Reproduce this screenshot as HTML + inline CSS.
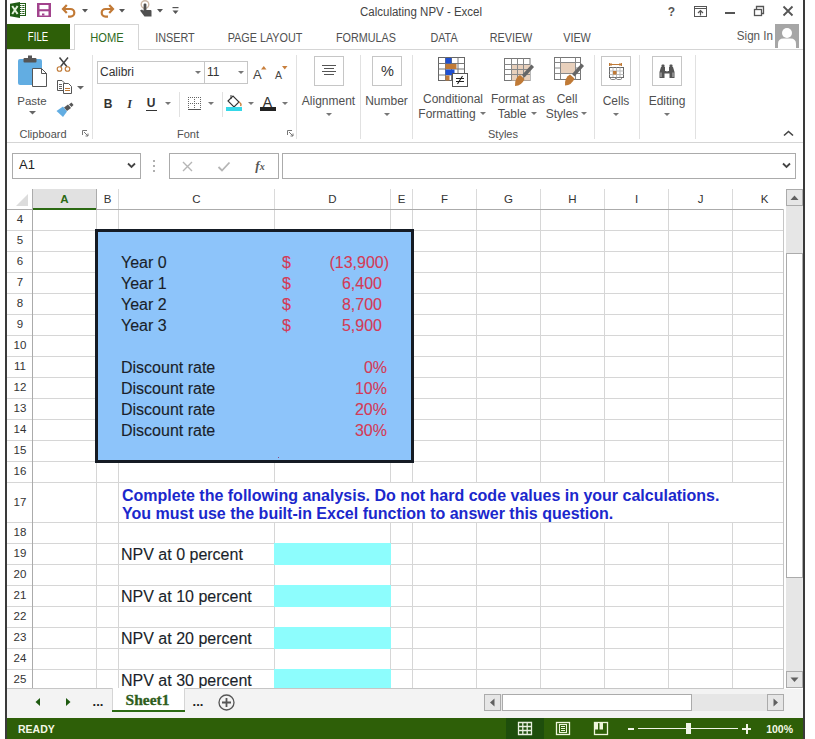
<!DOCTYPE html>
<html><head><meta charset="utf-8"><title>Calculating NPV - Excel</title>
<style>
html,body{margin:0;padding:0;}
body{width:815px;height:739px;position:relative;overflow:hidden;background:#fff;font-family:'Liberation Sans', sans-serif;}
body>div{position:absolute;box-sizing:content-box;}
</style></head><body>
<svg style="position:absolute;left:8px;top:1px" width="20" height="18" viewBox="0 0 20 18">
<rect x="11" y="2.5" width="6.5" height="12" fill="#fff" stroke="#1f5c14" stroke-width="1"/>
<path d="M12 4.5h4.5M12 6.5h4.5M12 8.5h4.5M12 10.5h4.5M12 12.5h4.5" stroke="#1f5c14" stroke-width="1"/>
<path d="M13.8 3v11" stroke="#fff" stroke-width="0.8"/>
<path d="M2 2.8 L12 1 V17 L2 15.2 Z" fill="#1f5c14"/>
<path d="M4.2 5 L9.6 13 M9.6 5 L4.2 13" stroke="#e4f2dc" stroke-width="2"/>
</svg>
<svg style="position:absolute;left:36px;top:2px" width="16" height="16" viewBox="0 0 16 16">
<rect x="1" y="1" width="14" height="14" fill="#a2438d"/>
<rect x="3.5" y="3" width="9" height="4.2" fill="#fff"/>
<rect x="3.5" y="9.3" width="9" height="4.2" fill="#fff"/>
<rect x="6" y="11.5" width="2.4" height="2" fill="#a2438d"/>
</svg>
<svg style="position:absolute;left:60px;top:2px" width="20" height="16" viewBox="0 0 20 16">
<path d="M4 7 H10.5 A3.8 3.8 0 0 1 10.5 14.6 H8" fill="none" stroke="#c27a36" stroke-width="2.2"/>
<path d="M6.8 3 L3 7 L6.8 11" fill="none" stroke="#c27a36" stroke-width="2.2"/>
</svg>
<svg style="position:absolute;left:82px;top:9px" width="6" height="4" viewBox="0 0 6 4"><path d="M0 0 H6 L3 3.5 Z" fill="#555"/></svg>
<svg style="position:absolute;left:97px;top:2px" width="20" height="16" viewBox="0 0 20 16">
<path d="M15 7 H8.5 A3.8 3.8 0 0 0 8.5 14.6 H11" fill="none" stroke="#c27a36" stroke-width="2.2"/>
<path d="M12.2 3 L16 7 L12.2 11" fill="none" stroke="#c27a36" stroke-width="2.2"/>
</svg>
<svg style="position:absolute;left:119px;top:9px" width="6" height="4" viewBox="0 0 6 4"><path d="M0 0 H6 L3 3.5 Z" fill="#555"/></svg>
<svg style="position:absolute;left:138px;top:0px" width="16" height="18" viewBox="0 0 16 18">
<circle cx="7" cy="4.5" r="3.8" fill="none" stroke="#cdb8a6" stroke-width="1.4"/>
<rect x="5.6" y="3.5" width="2.8" height="8" rx="1.2" fill="#505050"/>
<path d="M2 10.5 L4 9.5 L5.6 11 V10 H12.5 Q13.5 10 13.5 11 V16.5 H6.5 Z" fill="#505050"/>
</svg>
<svg style="position:absolute;left:157px;top:9px" width="6" height="4" viewBox="0 0 6 4"><path d="M0 0 H6 L3 3.5 Z" fill="#555"/></svg>
<svg style="position:absolute;left:172px;top:7px" width="7" height="8" viewBox="0 0 7 8"><rect x="0.5" y="0" width="6" height="1.2" fill="#555"/><path d="M0.5 3.5 H6.5 L3.5 7 Z" fill="#555"/></svg>
<div style="left:360px;top:5.79px;font:400 12.3px/12.3px 'Liberation Sans', sans-serif;color:#444;white-space:pre;transform:scaleX(0.935);transform-origin:left;">Calculating NPV - Excel</div>
<div style="left:371.5px;width:600px;text-align:center;top:5.84px;font:700 12px/12px 'Liberation Sans', sans-serif;color:#555;white-space:pre;">?</div>
<svg style="position:absolute;left:693px;top:5px" width="15" height="12" viewBox="0 0 15 12">
<rect x="1.5" y="1.5" width="12" height="10" fill="none" stroke="#555" stroke-width="1"/>
<path d="M1.5 3.5 H13.5" stroke="#555" stroke-width="1"/>
<path d="M7.5 10.5 V5.5 M5 8 L7.5 5.5 L10 8" fill="none" stroke="#555" stroke-width="1.2"/>
</svg>
<div style="left:725px;top:12px;width:10px;height:2px;background:#555;"></div>
<svg style="position:absolute;left:753px;top:5px" width="12" height="12" viewBox="0 0 12 12">
<rect x="1.5" y="4.5" width="7" height="6" fill="none" stroke="#555" stroke-width="1.3"/>
<path d="M3.5 4.5 V1.5 H10.5 V8.5 H8.5" fill="none" stroke="#555" stroke-width="1.3"/>
</svg>
<svg style="position:absolute;left:782px;top:5px" width="12" height="12" viewBox="0 0 12 12"><path d="M1.5 1.5 L10.5 10.5 M10.5 1.5 L1.5 10.5" stroke="#555" stroke-width="1.8"/></svg>
<div style="left:7px;top:24px;width:63px;height:25px;background:#2e5f08;"></div>
<div style="left:-262.5px;width:600px;text-align:center;top:30.84px;font:400 12px/12px 'Liberation Sans', sans-serif;color:#fff;white-space:pre;transform:scaleX(0.8);transform-origin:center;">FILE</div>
<div style="left:74px;top:24px;width:63px;height:25px;border:1px solid #d5d5d5;border-bottom:none;background:#fff"></div>
<div style="left:7px;top:49px;width:67px;height:1px;background:#d5d5d5;"></div>
<div style="left:139px;top:49px;width:664px;height:1px;background:#d5d5d5;"></div>
<div style="left:-193.5px;width:600px;text-align:center;top:31.84px;font:400 12px/12px 'Liberation Sans', sans-serif;color:#2f6b22;white-space:pre;transform:scaleX(0.93);transform-origin:center;">HOME</div>
<div style="left:-125.30000000000001px;width:600px;text-align:center;top:31.84px;font:400 12px/12px 'Liberation Sans', sans-serif;color:#505050;white-space:pre;transform:scaleX(0.9);transform-origin:center;">INSERT</div>
<div style="left:-35.5px;width:600px;text-align:center;top:31.84px;font:400 12px/12px 'Liberation Sans', sans-serif;color:#505050;white-space:pre;transform:scaleX(0.9);transform-origin:center;">PAGE LAYOUT</div>
<div style="left:65.5px;width:600px;text-align:center;top:31.84px;font:400 12px/12px 'Liberation Sans', sans-serif;color:#505050;white-space:pre;transform:scaleX(0.9);transform-origin:center;">FORMULAS</div>
<div style="left:143.8px;width:600px;text-align:center;top:31.84px;font:400 12px/12px 'Liberation Sans', sans-serif;color:#505050;white-space:pre;transform:scaleX(0.9);transform-origin:center;">DATA</div>
<div style="left:211.3px;width:600px;text-align:center;top:31.84px;font:400 12px/12px 'Liberation Sans', sans-serif;color:#505050;white-space:pre;transform:scaleX(0.9);transform-origin:center;">REVIEW</div>
<div style="left:276.70000000000005px;width:600px;text-align:center;top:31.84px;font:400 12px/12px 'Liberation Sans', sans-serif;color:#505050;white-space:pre;transform:scaleX(0.9);transform-origin:center;">VIEW</div>
<div style="left:173px;width:600px;text-align:right;top:30.42px;font:400 12.5px/12.5px 'Liberation Sans', sans-serif;color:#555;white-space:pre;transform:scaleX(0.93);transform-origin:right;">Sign In</div>
<div style="left:775px;top:24px;width:24px;height:24px;background:#a6a6a6;"></div>
<svg style="position:absolute;left:775px;top:24px" width="24" height="24" viewBox="0 0 24 24"><circle cx="12" cy="9" r="5" fill="#fff"/><path d="M3 24 V20 Q3 14.5 8.5 14.5 H15.5 Q21 14.5 21 20 V24 Z" fill="#fff"/></svg>
<div style="left:7px;top:142px;width:796px;height:1px;background:#d5d5d5;"></div>
<div style="left:92px;top:55px;width:1px;height:84px;background:#e1e1e1;"></div>
<div style="left:296px;top:55px;width:1px;height:84px;background:#e1e1e1;"></div>
<div style="left:360px;top:55px;width:1px;height:84px;background:#e1e1e1;"></div>
<div style="left:412px;top:55px;width:1px;height:84px;background:#e1e1e1;"></div>
<div style="left:594px;top:55px;width:1px;height:84px;background:#e1e1e1;"></div>
<div style="left:639px;top:55px;width:1px;height:84px;background:#e1e1e1;"></div>
<div style="left:695px;top:55px;width:1px;height:84px;background:#e1e1e1;"></div>
<div style="left:-257px;width:600px;text-align:center;top:129.19px;font:400 11px/11px 'Liberation Sans', sans-serif;color:#505050;white-space:pre;">Clipboard</div>
<div style="left:-112px;width:600px;text-align:center;top:129.19px;font:400 11px/11px 'Liberation Sans', sans-serif;color:#505050;white-space:pre;">Font</div>
<div style="left:203px;width:600px;text-align:center;top:129.19px;font:400 11px/11px 'Liberation Sans', sans-serif;color:#505050;white-space:pre;">Styles</div>
<svg style="position:absolute;left:16px;top:55px" width="34" height="34" viewBox="0 0 34 34">
<rect x="2" y="4" width="24" height="26" rx="2" fill="#62ade2"/>
<rect x="7.5" y="3" width="13" height="4.5" rx="1" fill="#555"/>
<rect x="12" y="0.5" width="4" height="4" fill="#555"/>
<path d="M16.5 13.5 H25.5 L30.5 18.5 V31.5 H16.5 Z" fill="#fff" stroke="#555" stroke-width="1"/>
<path d="M25.5 13.5 V18.5 H30.5" fill="none" stroke="#555" stroke-width="1"/>
</svg>
<div style="left:-268px;width:600px;text-align:center;top:95.77px;font:400 11.5px/11.5px 'Liberation Sans', sans-serif;color:#505050;white-space:pre;">Paste</div>
<svg style="position:absolute;left:29px;top:111px" width="7" height="4" viewBox="0 0 7 4"><path d="M0 0 H7 L3.5 3.5 Z" fill="#666"/></svg>
<svg style="position:absolute;left:55px;top:56px" width="18" height="17" viewBox="0 0 18 17">
<path d="M4.5 1.5 L12 10.8 M13 1.5 L5.5 10.8" stroke="#444" stroke-width="1.5"/>
<circle cx="4.5" cy="13" r="2.3" fill="#fff" stroke="#c07a36" stroke-width="1.1"/>
<circle cx="12.5" cy="13" r="2.3" fill="#fff" stroke="#c07a36" stroke-width="1.1"/>
</svg>
<svg style="position:absolute;left:56px;top:79px" width="18" height="16" viewBox="0 0 18 16">
<path d="M1.5 1.5 H6 L8 3.5 V11.5 H1.5 Z" fill="#fff" stroke="#555" stroke-width="1"/>
<path d="M3 5.5 H6 M3 7.5 H6 M3 9.5 H6" stroke="#555" stroke-width="0.9"/>
<path d="M7.5 4.5 H12.5 L15.5 7.5 V14.5 H7.5 Z" fill="#fff" stroke="#555" stroke-width="1"/>
<path d="M9 9.5 H14 M9 11.5 H14" stroke="#c07a36" stroke-width="1"/>
</svg>
<svg style="position:absolute;left:77px;top:86px" width="7" height="4" viewBox="0 0 7 4"><path d="M0 0 H7 L3.5 3.5 Z" fill="#666"/></svg>
<svg style="position:absolute;left:56px;top:102px" width="18" height="16" viewBox="0 0 18 16">
<path d="M0.5 9 L7 4.5 L11 9.5 L7 15 Z" fill="#62ade2"/>
<path d="M8 5.5 L12 2.5 L15 6 L11 9 Z" fill="#555"/>
<path d="M13 2.5 L15.5 0.5 L17.5 3 L15.5 5 Z" fill="#555"/>
</svg>
<svg style="position:absolute;left:82px;top:130px" width="7" height="7" viewBox="0 0 7 7"><path d="M0.5 0.5 H5 M0.5 0.5 V5" stroke="#777" stroke-width="1"/><path d="M2 2 L6 6 M6 3.5 V6 H3.5" fill="none" stroke="#777" stroke-width="1"/></svg>
<div style="left:97px;top:61px;width:106px;height:21px;border:1px solid #c6c6c6;background:#fff;"></div>
<div style="left:204px;top:61px;width:42px;height:21px;border:1px solid #c6c6c6;background:#fff;"></div>
<div style="left:100px;top:66.34px;font:400 12px/12px 'Liberation Sans', sans-serif;color:#333;white-space:pre;">Calibri</div>
<div style="left:207px;top:66.34px;font:400 12px/12px 'Liberation Sans', sans-serif;color:#333;white-space:pre;">11</div>
<svg style="position:absolute;left:195px;top:71px" width="6" height="4" viewBox="0 0 6 4"><path d="M0 0 H6 L3 3 Z" fill="#777"/></svg>
<svg style="position:absolute;left:238px;top:71px" width="6" height="4" viewBox="0 0 6 4"><path d="M0 0 H6 L3 3 Z" fill="#777"/></svg>
<div style="left:253px;top:68.00px;font:400 13px/13px 'Liberation Sans', sans-serif;color:#444;white-space:pre;">A</div>
<svg style="position:absolute;left:261px;top:65.5px" width="6" height="4" viewBox="0 0 6 4"><path d="M0 3.5 H5.5 L2.75 0 Z" fill="#c87f3c"/></svg>
<div style="left:275px;top:70.11px;font:400 10.5px/10.5px 'Liberation Sans', sans-serif;color:#444;white-space:pre;">A</div>
<svg style="position:absolute;left:281.5px;top:65.5px" width="6" height="4" viewBox="0 0 6 4"><path d="M0 0 H5.5 L2.75 3.5 Z" fill="#c87f3c"/></svg>
<div style="left:-192px;width:600px;text-align:center;top:97.84px;font:700 12px/12px 'Liberation Sans', sans-serif;color:#333;white-space:pre;">B</div>
<div style="left:-170.5px;width:600px;text-align:center;top:97.95px;font:400 12px/12px 'Liberation Serif', serif;color:#333;white-space:pre;font-style:italic;font-weight:700;">I</div>
<div style="left:-149px;width:600px;text-align:center;top:96.84px;font:700 12px/12px 'Liberation Sans', sans-serif;color:#333;white-space:pre;">U</div>
<div style="left:146px;top:110px;width:11px;height:1px;background:#333;"></div>
<svg style="position:absolute;left:165px;top:102px" width="6" height="4" viewBox="0 0 6 4"><path d="M0 0 H6 L3 3 Z" fill="#777"/></svg>
<div style="left:179px;top:92px;width:1px;height:25px;background:#e1e1e1;"></div>
<svg style="position:absolute;left:188px;top:97px" width="14" height="14" viewBox="0 0 14 14"><rect x="0" y="0" width="1" height="1" fill="#666"/><rect x="0" y="6" width="1" height="1" fill="#666"/><rect x="2" y="0" width="1" height="1" fill="#666"/><rect x="2" y="6" width="1" height="1" fill="#666"/><rect x="4" y="0" width="1" height="1" fill="#666"/><rect x="4" y="6" width="1" height="1" fill="#666"/><rect x="6" y="0" width="1" height="1" fill="#666"/><rect x="6" y="6" width="1" height="1" fill="#666"/><rect x="8" y="0" width="1" height="1" fill="#666"/><rect x="8" y="6" width="1" height="1" fill="#666"/><rect x="10" y="0" width="1" height="1" fill="#666"/><rect x="10" y="6" width="1" height="1" fill="#666"/><rect x="12" y="0" width="1" height="1" fill="#666"/><rect x="12" y="6" width="1" height="1" fill="#666"/><rect x="0" y="0" width="1" height="1" fill="#666"/><rect x="6" y="0" width="1" height="1" fill="#666"/><rect x="12" y="0" width="1" height="1" fill="#666"/><rect x="0" y="2" width="1" height="1" fill="#666"/><rect x="6" y="2" width="1" height="1" fill="#666"/><rect x="12" y="2" width="1" height="1" fill="#666"/><rect x="0" y="4" width="1" height="1" fill="#666"/><rect x="6" y="4" width="1" height="1" fill="#666"/><rect x="12" y="4" width="1" height="1" fill="#666"/><rect x="0" y="6" width="1" height="1" fill="#666"/><rect x="6" y="6" width="1" height="1" fill="#666"/><rect x="12" y="6" width="1" height="1" fill="#666"/><rect x="0" y="8" width="1" height="1" fill="#666"/><rect x="6" y="8" width="1" height="1" fill="#666"/><rect x="12" y="8" width="1" height="1" fill="#666"/><rect x="0" y="10" width="1" height="1" fill="#666"/><rect x="6" y="10" width="1" height="1" fill="#666"/><rect x="12" y="10" width="1" height="1" fill="#666"/><rect x="0" y="12" width="13" height="1" fill="#555"/></svg>
<svg style="position:absolute;left:208px;top:102px" width="6" height="4" viewBox="0 0 6 4"><path d="M0 0 H6 L3 3 Z" fill="#777"/></svg>
<div style="left:222px;top:92px;width:1px;height:25px;background:#e1e1e1;"></div>
<svg style="position:absolute;left:225px;top:93px" width="18" height="18" viewBox="0 0 18 18">
<path d="M3 8 L8 3 L14 9 L9 14 Z" fill="#fff" stroke="#333" stroke-width="1.1"/>
<path d="M6 2 V6" stroke="#333" stroke-width="1"/>
<path d="M14 9 Q17 11 15.5 13" fill="none" stroke="#c87f3c" stroke-width="1.5"/>
</svg>
<div style="left:226px;top:107px;width:16px;height:4px;background:#35d8e8;"></div>
<svg style="position:absolute;left:248px;top:102px" width="6" height="4" viewBox="0 0 6 4"><path d="M0 0 H6 L3 3 Z" fill="#777"/></svg>
<div style="left:-32.5px;width:600px;text-align:center;top:94.65px;font:400 14px/14px 'Liberation Sans', sans-serif;color:#333;white-space:pre;">A</div>
<div style="left:260px;top:107px;width:16px;height:4px;background:#222;"></div>
<svg style="position:absolute;left:282px;top:102px" width="6" height="4" viewBox="0 0 6 4"><path d="M0 0 H6 L3 3 Z" fill="#777"/></svg>
<svg style="position:absolute;left:287px;top:130px" width="7" height="7" viewBox="0 0 7 7"><path d="M0.5 0.5 H5 M0.5 0.5 V5" stroke="#777" stroke-width="1"/><path d="M2 2 L6 6 M6 3.5 V6 H3.5" fill="none" stroke="#777" stroke-width="1"/></svg>
<div style="left:314px;top:56px;width:28px;height:28px;border:1px solid #c6c6c6;background:#fff;"></div>
<svg style="position:absolute;left:314px;top:56px" width="30" height="30" viewBox="0 0 30 30"><path d="M8 9.5 H22 M10 12.5 H20 M8 15.5 H22 M10 18.5 H20" stroke="#555" stroke-width="1"/></svg>
<div style="left:28.5px;width:600px;text-align:center;top:95.34px;font:400 12px/12px 'Liberation Sans', sans-serif;color:#505050;white-space:pre;">Alignment</div>
<svg style="position:absolute;left:326px;top:113px" width="6" height="4" viewBox="0 0 6 4"><path d="M0 0 H6 L3 3 Z" fill="#777"/></svg>
<div style="left:372px;top:56px;width:28px;height:28px;border:1px solid #c6c6c6;background:#fff;"></div>
<div style="left:87.5px;width:600px;text-align:center;top:64.23px;font:400 14.5px/14.5px 'Liberation Sans', sans-serif;color:#333;white-space:pre;">%</div>
<div style="left:86.5px;width:600px;text-align:center;top:95.34px;font:400 12px/12px 'Liberation Sans', sans-serif;color:#505050;white-space:pre;">Number</div>
<svg style="position:absolute;left:384px;top:113px" width="6" height="4" viewBox="0 0 6 4"><path d="M0 0 H6 L3 3 Z" fill="#777"/></svg>
<svg style="position:absolute;left:437px;top:56px" width="32" height="32" viewBox="0 0 32 32">
<rect x="1.5" y="1.5" width="26" height="23" fill="#fff" stroke="#666" stroke-width="1"/>
<path d="M1.5 7.5 H27.5 M1.5 13 H27.5 M1.5 19 H27.5 M8.5 1.5 V24.5 M14.5 1.5 V24.5 M21 1.5 V24.5" stroke="#777" stroke-width="1"/>
<rect x="8.5" y="2" width="6" height="5.5" fill="#1f4fd0"/>
<rect x="8.5" y="8" width="11" height="5" fill="#c07a36"/>
<rect x="8.5" y="13.5" width="9" height="5.5" fill="#1f4fd0"/>
<rect x="8.5" y="19.5" width="4" height="5" fill="#c07a36"/>
<rect x="15.5" y="17.5" width="15" height="13" fill="#fff" stroke="#555" stroke-width="1"/>
<path d="M19 22.5 H27 M19 25.5 H27 M25.5 20 L20.5 28" stroke="#222" stroke-width="1.1"/>
</svg>
<div style="left:153px;width:600px;text-align:center;top:92.84px;font:400 12px/12px 'Liberation Sans', sans-serif;color:#505050;white-space:pre;">Conditional</div>
<div style="left:147px;width:600px;text-align:center;top:107.84px;font:400 12px/12px 'Liberation Sans', sans-serif;color:#505050;white-space:pre;">Formatting</div>
<svg style="position:absolute;left:480px;top:112px" width="6" height="4" viewBox="0 0 6 4"><path d="M0 0 H6 L3 3 Z" fill="#777"/></svg>
<svg style="position:absolute;left:503px;top:56px" width="32" height="32" viewBox="0 0 32 32">
<rect x="1.5" y="2.5" width="25.5" height="22" fill="#fff" stroke="#777" stroke-width="1"/>
<rect x="8.5" y="8.5" width="18.5" height="16" fill="#e8d0bc"/>
<path d="M1.5 8.5 H27 M1.5 13.5 H27 M1.5 18.5 H27 M8.5 2.5 V24.5 M14.5 2.5 V24.5 M20.5 2.5 V24.5" stroke="#888" stroke-width="1"/>
<path d="M19 19 L28.5 8.5 L31 11 L21.5 21.5 Z" fill="#666"/>
<path d="M12 30 Q11.5 22 17 19 L21.5 23 Q19 29.5 12 30 Z" fill="#c07a36"/>
</svg>
<div style="left:218px;width:600px;text-align:center;top:92.84px;font:400 12px/12px 'Liberation Sans', sans-serif;color:#505050;white-space:pre;">Format as</div>
<div style="left:212px;width:600px;text-align:center;top:107.84px;font:400 12px/12px 'Liberation Sans', sans-serif;color:#505050;white-space:pre;">Table</div>
<svg style="position:absolute;left:531px;top:112px" width="6" height="4" viewBox="0 0 6 4"><path d="M0 0 H6 L3 3 Z" fill="#777"/></svg>
<svg style="position:absolute;left:553px;top:56px" width="32" height="32" viewBox="0 0 32 32">
<rect x="1.5" y="1.5" width="26" height="22" fill="#fff" stroke="#777" stroke-width="1"/>
<path d="M1.5 6.5 H27.5 M1.5 12 H27.5 M1.5 17.5 H27.5 M7.5 1.5 V23.5 M22.5 1.5 V23.5" stroke="#888" stroke-width="1"/>
<rect x="8" y="7" width="14" height="10" fill="#e8d0bc"/>
<path d="M19 18 L28.5 7.5 L31 10 L21.5 20.5 Z" fill="#666"/>
<path d="M12 29.5 Q11.5 21.5 17 18.5 L21.5 22.5 Q19 29 12 29.5 Z" fill="#c07a36"/>
</svg>
<div style="left:267px;width:600px;text-align:center;top:92.84px;font:400 12px/12px 'Liberation Sans', sans-serif;color:#505050;white-space:pre;">Cell</div>
<div style="left:262px;width:600px;text-align:center;top:107.84px;font:400 12px/12px 'Liberation Sans', sans-serif;color:#505050;white-space:pre;">Styles</div>
<svg style="position:absolute;left:581px;top:112px" width="6" height="4" viewBox="0 0 6 4"><path d="M0 0 H6 L3 3 Z" fill="#777"/></svg>
<div style="left:601px;top:56px;width:28px;height:28px;border:1px solid #c6c6c6;background:#fff;"></div>
<svg style="position:absolute;left:601px;top:56px" width="30" height="30" viewBox="0 0 30 30">
<path d="M8.5 7 V10 M20.5 7 V10 M9 8.5 H20" stroke="#c07a36" stroke-width="1"/>
<path d="M10.5 7 L9 8.5 L10.5 10 M18.5 7 L20 8.5 L18.5 10" fill="none" stroke="#c07a36" stroke-width="1"/>
<rect x="8.5" y="11.5" width="14" height="10" fill="#fff" stroke="#666" stroke-width="1"/>
<path d="M8.5 15 H22.5 M8.5 18.5 H22.5 M12 11.5 V21.5 M15.5 11.5 V21.5 M19 11.5 V21.5" stroke="#bbb" stroke-width="1"/>
<rect x="12" y="15" width="3.5" height="3.5" fill="#c07a36"/>
<rect x="9.5" y="21.5" width="5" height="2" rx="1" fill="#fff" stroke="#666" stroke-width="0.8"/>
<rect x="15.5" y="21.5" width="5" height="2" rx="1" fill="#fff" stroke="#666" stroke-width="0.8"/>
</svg>
<div style="left:316px;width:600px;text-align:center;top:95.34px;font:400 12px/12px 'Liberation Sans', sans-serif;color:#505050;white-space:pre;">Cells</div>
<svg style="position:absolute;left:613px;top:113px" width="6" height="4" viewBox="0 0 6 4"><path d="M0 0 H6 L3 3 Z" fill="#777"/></svg>
<div style="left:652px;top:56px;width:28px;height:28px;border:1px solid #c6c6c6;background:#fff;"></div>
<svg style="position:absolute;left:652px;top:56px" width="30" height="30" viewBox="0 0 30 30">
<rect x="9.5" y="8.5" width="3" height="3" rx="1" fill="#555"/>
<rect x="17.5" y="8.5" width="3" height="3" rx="1" fill="#555"/>
<path d="M9 11 H13 V15 H17 V11 H21 L22.5 16 V22 H17.5 V17.5 H12.5 V22 H7.5 V16 Z" fill="#555"/>
<path d="M9 16.5 V21 M21 16.5 V21" stroke="#ddd" stroke-width="0.8"/>
<circle cx="15" cy="14.5" r="1" fill="#fff"/>
</svg>
<div style="left:367px;width:600px;text-align:center;top:95.34px;font:400 12px/12px 'Liberation Sans', sans-serif;color:#505050;white-space:pre;">Editing</div>
<svg style="position:absolute;left:664px;top:113px" width="6" height="4" viewBox="0 0 6 4"><path d="M0 0 H6 L3 3 Z" fill="#777"/></svg>
<svg style="position:absolute;left:783px;top:130px" width="11" height="7" viewBox="0 0 11 7"><path d="M1 5.5 L5.5 1.5 L10 5.5" fill="none" stroke="#444" stroke-width="1.6"/></svg>
<div style="left:12px;top:153px;width:127px;height:24px;border:1px solid #ababab;background:#fff;"></div>
<div style="left:19px;top:157.50px;font:400 13px/13px 'Liberation Sans', sans-serif;color:#222;white-space:pre;">A1</div>
<svg style="position:absolute;left:127px;top:162px" width="9" height="7" viewBox="0 0 9 7"><path d="M1 1.5 L4.5 5 L8 1.5" fill="none" stroke="#444" stroke-width="1.8"/></svg>
<div style="left:153px;top:160px;width:2px;height:2px;background:#b0b0b0;"></div>
<div style="left:153px;top:165px;width:2px;height:2px;background:#b0b0b0;"></div>
<div style="left:153px;top:170px;width:2px;height:2px;background:#b0b0b0;"></div>
<div style="left:169px;top:153px;width:108px;height:24px;border:1px solid #ababab;background:#fff;"></div>
<svg style="position:absolute;left:181px;top:160px" width="13" height="13" viewBox="0 0 13 13"><path d="M2 2 L11 11 M11 2 L2 11" stroke="#b5b5b5" stroke-width="1.4"/></svg>
<svg style="position:absolute;left:217px;top:160px" width="14" height="13" viewBox="0 0 14 13"><path d="M1.5 7 L5 10.5 L12.5 2.5" fill="none" stroke="#b5b5b5" stroke-width="1.8"/></svg>
<div style="left:-40px;width:600px;text-align:center;top:159.11px;font:700 13px/13px 'Liberation Serif', serif;color:#555;white-space:pre;font-style:italic;">f<span style="font-size:10px">x</span></div>
<div style="left:282px;top:153px;width:512px;height:24px;border:1px solid #ababab;background:#fff;"></div>
<svg style="position:absolute;left:782px;top:162px" width="9" height="7" viewBox="0 0 9 7"><path d="M1 1.5 L4.5 5 L8 1.5" fill="none" stroke="#444" stroke-width="1.8"/></svg>
<div style="left:33px;top:189px;width:63px;height:19px;background:#e1e1e1;"></div>
<div style="left:33px;top:208px;width:63px;height:2px;background:#2c6a14;"></div>
<div style="left:-235.5px;width:600px;text-align:center;top:194.27px;font:700 11.5px/11.5px 'Liberation Sans', sans-serif;color:#2c6a14;white-space:pre;">A</div>
<div style="left:-192.5px;width:600px;text-align:center;top:194.27px;font:400 11.5px/11.5px 'Liberation Sans', sans-serif;color:#333;white-space:pre;">B</div>
<div style="left:-103.5px;width:600px;text-align:center;top:194.27px;font:400 11.5px/11.5px 'Liberation Sans', sans-serif;color:#333;white-space:pre;">C</div>
<div style="left:32.5px;width:600px;text-align:center;top:194.27px;font:400 11.5px/11.5px 'Liberation Sans', sans-serif;color:#333;white-space:pre;">D</div>
<div style="left:101.5px;width:600px;text-align:center;top:194.27px;font:400 11.5px/11.5px 'Liberation Sans', sans-serif;color:#333;white-space:pre;">E</div>
<div style="left:144.5px;width:600px;text-align:center;top:194.27px;font:400 11.5px/11.5px 'Liberation Sans', sans-serif;color:#333;white-space:pre;">F</div>
<div style="left:208.5px;width:600px;text-align:center;top:194.27px;font:400 11.5px/11.5px 'Liberation Sans', sans-serif;color:#333;white-space:pre;">G</div>
<div style="left:272.5px;width:600px;text-align:center;top:194.27px;font:400 11.5px/11.5px 'Liberation Sans', sans-serif;color:#333;white-space:pre;">H</div>
<div style="left:336.5px;width:600px;text-align:center;top:194.27px;font:400 11.5px/11.5px 'Liberation Sans', sans-serif;color:#333;white-space:pre;">I</div>
<div style="left:400.5px;width:600px;text-align:center;top:194.27px;font:400 11.5px/11.5px 'Liberation Sans', sans-serif;color:#333;white-space:pre;">J</div>
<div style="left:464.5px;width:600px;text-align:center;top:194.27px;font:400 11.5px/11.5px 'Liberation Sans', sans-serif;color:#333;white-space:pre;">K</div>
<div style="left:96px;top:189px;width:1px;height:20px;background:#ababab;"></div>
<div style="left:118px;top:189px;width:1px;height:20px;background:#dadada;"></div>
<div style="left:274px;top:189px;width:1px;height:20px;background:#dadada;"></div>
<div style="left:390px;top:189px;width:1px;height:20px;background:#dadada;"></div>
<div style="left:412px;top:189px;width:1px;height:20px;background:#dadada;"></div>
<div style="left:476px;top:189px;width:1px;height:20px;background:#dadada;"></div>
<div style="left:540px;top:189px;width:1px;height:20px;background:#dadada;"></div>
<div style="left:604px;top:189px;width:1px;height:20px;background:#dadada;"></div>
<div style="left:668px;top:189px;width:1px;height:20px;background:#dadada;"></div>
<div style="left:732px;top:189px;width:1px;height:20px;background:#dadada;"></div>
<div style="left:7px;top:209px;width:25px;height:1px;background:#ababab;"></div>
<div style="left:96px;top:209px;width:687px;height:1px;background:#ababab;"></div>
<svg style="position:absolute;left:15px;top:193px" width="15" height="14" viewBox="0 0 15 14"><path d="M13 1 V13 H1 Z" fill="#dcdcdc"/></svg>
<div style="left:32px;top:189px;width:1px;height:499px;background:#ababab;"></div>
<div style="left:7px;top:230px;width:25px;height:1px;background:#d6d6d6;"></div>
<div style="left:33px;top:230px;width:750px;height:1px;background:#d6d6d6;"></div>
<div style="left:7px;top:251px;width:25px;height:1px;background:#d6d6d6;"></div>
<div style="left:33px;top:251px;width:750px;height:1px;background:#d6d6d6;"></div>
<div style="left:7px;top:272px;width:25px;height:1px;background:#d6d6d6;"></div>
<div style="left:33px;top:272px;width:750px;height:1px;background:#d6d6d6;"></div>
<div style="left:7px;top:293px;width:25px;height:1px;background:#d6d6d6;"></div>
<div style="left:33px;top:293px;width:750px;height:1px;background:#d6d6d6;"></div>
<div style="left:7px;top:314px;width:25px;height:1px;background:#d6d6d6;"></div>
<div style="left:33px;top:314px;width:750px;height:1px;background:#d6d6d6;"></div>
<div style="left:7px;top:335px;width:25px;height:1px;background:#d6d6d6;"></div>
<div style="left:33px;top:335px;width:750px;height:1px;background:#d6d6d6;"></div>
<div style="left:7px;top:356px;width:25px;height:1px;background:#d6d6d6;"></div>
<div style="left:33px;top:356px;width:750px;height:1px;background:#d6d6d6;"></div>
<div style="left:7px;top:377px;width:25px;height:1px;background:#d6d6d6;"></div>
<div style="left:33px;top:377px;width:750px;height:1px;background:#d6d6d6;"></div>
<div style="left:7px;top:398px;width:25px;height:1px;background:#d6d6d6;"></div>
<div style="left:33px;top:398px;width:750px;height:1px;background:#d6d6d6;"></div>
<div style="left:7px;top:419px;width:25px;height:1px;background:#d6d6d6;"></div>
<div style="left:33px;top:419px;width:750px;height:1px;background:#d6d6d6;"></div>
<div style="left:7px;top:440px;width:25px;height:1px;background:#d6d6d6;"></div>
<div style="left:33px;top:440px;width:750px;height:1px;background:#d6d6d6;"></div>
<div style="left:7px;top:461px;width:25px;height:1px;background:#d6d6d6;"></div>
<div style="left:33px;top:461px;width:750px;height:1px;background:#d6d6d6;"></div>
<div style="left:7px;top:482px;width:25px;height:1px;background:#d6d6d6;"></div>
<div style="left:33px;top:482px;width:750px;height:1px;background:#d6d6d6;"></div>
<div style="left:7px;top:522px;width:25px;height:1px;background:#d6d6d6;"></div>
<div style="left:33px;top:522px;width:750px;height:1px;background:#d6d6d6;"></div>
<div style="left:7px;top:543px;width:25px;height:1px;background:#d6d6d6;"></div>
<div style="left:33px;top:543px;width:750px;height:1px;background:#d6d6d6;"></div>
<div style="left:7px;top:564px;width:25px;height:1px;background:#d6d6d6;"></div>
<div style="left:33px;top:564px;width:750px;height:1px;background:#d6d6d6;"></div>
<div style="left:7px;top:585px;width:25px;height:1px;background:#d6d6d6;"></div>
<div style="left:33px;top:585px;width:750px;height:1px;background:#d6d6d6;"></div>
<div style="left:7px;top:606px;width:25px;height:1px;background:#d6d6d6;"></div>
<div style="left:33px;top:606px;width:750px;height:1px;background:#d6d6d6;"></div>
<div style="left:7px;top:627px;width:25px;height:1px;background:#d6d6d6;"></div>
<div style="left:33px;top:627px;width:750px;height:1px;background:#d6d6d6;"></div>
<div style="left:7px;top:648px;width:25px;height:1px;background:#d6d6d6;"></div>
<div style="left:33px;top:648px;width:750px;height:1px;background:#d6d6d6;"></div>
<div style="left:7px;top:669px;width:25px;height:1px;background:#d6d6d6;"></div>
<div style="left:33px;top:669px;width:750px;height:1px;background:#d6d6d6;"></div>
<div style="left:96px;top:210px;width:1px;height:478px;background:#d6d6d6;"></div>
<div style="left:118px;top:210px;width:1px;height:478px;background:#d6d6d6;"></div>
<div style="left:274px;top:210px;width:1px;height:478px;background:#d6d6d6;"></div>
<div style="left:390px;top:210px;width:1px;height:478px;background:#d6d6d6;"></div>
<div style="left:412px;top:210px;width:1px;height:478px;background:#d6d6d6;"></div>
<div style="left:476px;top:210px;width:1px;height:478px;background:#d6d6d6;"></div>
<div style="left:540px;top:210px;width:1px;height:478px;background:#d6d6d6;"></div>
<div style="left:604px;top:210px;width:1px;height:478px;background:#d6d6d6;"></div>
<div style="left:668px;top:210px;width:1px;height:478px;background:#d6d6d6;"></div>
<div style="left:732px;top:210px;width:1px;height:478px;background:#d6d6d6;"></div>
<div style="left:783px;top:209px;width:1px;height:479px;background:#c6c6c6;"></div>
<div style="left:7px;top:688px;width:777px;height:1px;background:#c6c6c6;"></div>
<div style="left:-280px;width:600px;text-align:center;top:214.27px;font:400 11.5px/11.5px 'Liberation Sans', sans-serif;color:#333;white-space:pre;">4</div>
<div style="left:-280px;width:600px;text-align:center;top:235.27px;font:400 11.5px/11.5px 'Liberation Sans', sans-serif;color:#333;white-space:pre;">5</div>
<div style="left:-280px;width:600px;text-align:center;top:256.27px;font:400 11.5px/11.5px 'Liberation Sans', sans-serif;color:#333;white-space:pre;">6</div>
<div style="left:-280px;width:600px;text-align:center;top:277.27px;font:400 11.5px/11.5px 'Liberation Sans', sans-serif;color:#333;white-space:pre;">7</div>
<div style="left:-280px;width:600px;text-align:center;top:298.27px;font:400 11.5px/11.5px 'Liberation Sans', sans-serif;color:#333;white-space:pre;">8</div>
<div style="left:-280px;width:600px;text-align:center;top:319.27px;font:400 11.5px/11.5px 'Liberation Sans', sans-serif;color:#333;white-space:pre;">9</div>
<div style="left:-280px;width:600px;text-align:center;top:340.27px;font:400 11.5px/11.5px 'Liberation Sans', sans-serif;color:#333;white-space:pre;">10</div>
<div style="left:-280px;width:600px;text-align:center;top:361.27px;font:400 11.5px/11.5px 'Liberation Sans', sans-serif;color:#333;white-space:pre;">11</div>
<div style="left:-280px;width:600px;text-align:center;top:382.27px;font:400 11.5px/11.5px 'Liberation Sans', sans-serif;color:#333;white-space:pre;">12</div>
<div style="left:-280px;width:600px;text-align:center;top:403.27px;font:400 11.5px/11.5px 'Liberation Sans', sans-serif;color:#333;white-space:pre;">13</div>
<div style="left:-280px;width:600px;text-align:center;top:424.27px;font:400 11.5px/11.5px 'Liberation Sans', sans-serif;color:#333;white-space:pre;">14</div>
<div style="left:-280px;width:600px;text-align:center;top:445.27px;font:400 11.5px/11.5px 'Liberation Sans', sans-serif;color:#333;white-space:pre;">15</div>
<div style="left:-280px;width:600px;text-align:center;top:466.27px;font:400 11.5px/11.5px 'Liberation Sans', sans-serif;color:#333;white-space:pre;">16</div>
<div style="left:-280px;width:600px;text-align:center;top:496.77px;font:400 11.5px/11.5px 'Liberation Sans', sans-serif;color:#333;white-space:pre;">17</div>
<div style="left:-280px;width:600px;text-align:center;top:527.27px;font:400 11.5px/11.5px 'Liberation Sans', sans-serif;color:#333;white-space:pre;">18</div>
<div style="left:-280px;width:600px;text-align:center;top:548.27px;font:400 11.5px/11.5px 'Liberation Sans', sans-serif;color:#333;white-space:pre;">19</div>
<div style="left:-280px;width:600px;text-align:center;top:569.27px;font:400 11.5px/11.5px 'Liberation Sans', sans-serif;color:#333;white-space:pre;">20</div>
<div style="left:-280px;width:600px;text-align:center;top:590.27px;font:400 11.5px/11.5px 'Liberation Sans', sans-serif;color:#333;white-space:pre;">21</div>
<div style="left:-280px;width:600px;text-align:center;top:611.27px;font:400 11.5px/11.5px 'Liberation Sans', sans-serif;color:#333;white-space:pre;">22</div>
<div style="left:-280px;width:600px;text-align:center;top:632.27px;font:400 11.5px/11.5px 'Liberation Sans', sans-serif;color:#333;white-space:pre;">23</div>
<div style="left:-280px;width:600px;text-align:center;top:653.27px;font:400 11.5px/11.5px 'Liberation Sans', sans-serif;color:#333;white-space:pre;">24</div>
<div style="left:-280px;width:600px;text-align:center;top:674.27px;font:400 11.5px/11.5px 'Liberation Sans', sans-serif;color:#333;white-space:pre;">25</div>
<div style="left:96px;top:230px;width:317px;height:232px;background:#8dc4fa;"></div>
<div style="left:95px;top:229px;width:319px;height:3px;background:#151b24;"></div>
<div style="left:95px;top:460px;width:319px;height:3px;background:#151b24;"></div>
<div style="left:95px;top:229px;width:3px;height:234px;background:#151b24;"></div>
<div style="left:411px;top:229px;width:3px;height:234px;background:#151b24;"></div>
<div style="left:121px;top:255.46px;font:400 16px/16px 'Liberation Sans', sans-serif;color:#1a1f2a;white-space:pre;-webkit-text-stroke:0.12px currentColor;">Year 0</div>
<div style="left:282px;top:255.46px;font:400 16px/16px 'Liberation Sans', sans-serif;color:#d43a56;white-space:pre;-webkit-text-stroke:0.12px currentColor;">$</div>
<div style="left:-211px;width:600px;text-align:right;top:255.46px;font:400 16px/16px 'Liberation Sans', sans-serif;color:#d43a56;white-space:pre;-webkit-text-stroke:0.12px currentColor;">(13,900)</div>
<div style="left:121px;top:276.46px;font:400 16px/16px 'Liberation Sans', sans-serif;color:#1a1f2a;white-space:pre;-webkit-text-stroke:0.12px currentColor;">Year 1</div>
<div style="left:282px;top:276.46px;font:400 16px/16px 'Liberation Sans', sans-serif;color:#d43a56;white-space:pre;-webkit-text-stroke:0.12px currentColor;">$</div>
<div style="left:-218px;width:600px;text-align:right;top:276.46px;font:400 16px/16px 'Liberation Sans', sans-serif;color:#d43a56;white-space:pre;-webkit-text-stroke:0.12px currentColor;">6,400</div>
<div style="left:121px;top:297.46px;font:400 16px/16px 'Liberation Sans', sans-serif;color:#1a1f2a;white-space:pre;-webkit-text-stroke:0.12px currentColor;">Year 2</div>
<div style="left:282px;top:297.46px;font:400 16px/16px 'Liberation Sans', sans-serif;color:#d43a56;white-space:pre;-webkit-text-stroke:0.12px currentColor;">$</div>
<div style="left:-218px;width:600px;text-align:right;top:297.46px;font:400 16px/16px 'Liberation Sans', sans-serif;color:#d43a56;white-space:pre;-webkit-text-stroke:0.12px currentColor;">8,700</div>
<div style="left:121px;top:318.46px;font:400 16px/16px 'Liberation Sans', sans-serif;color:#1a1f2a;white-space:pre;-webkit-text-stroke:0.12px currentColor;">Year 3</div>
<div style="left:282px;top:318.46px;font:400 16px/16px 'Liberation Sans', sans-serif;color:#d43a56;white-space:pre;-webkit-text-stroke:0.12px currentColor;">$</div>
<div style="left:-218px;width:600px;text-align:right;top:318.46px;font:400 16px/16px 'Liberation Sans', sans-serif;color:#d43a56;white-space:pre;-webkit-text-stroke:0.12px currentColor;">5,900</div>
<div style="left:121px;top:360.46px;font:400 16px/16px 'Liberation Sans', sans-serif;color:#1a1f2a;white-space:pre;-webkit-text-stroke:0.12px currentColor;">Discount rate</div>
<div style="left:-213px;width:600px;text-align:right;top:360.46px;font:400 16px/16px 'Liberation Sans', sans-serif;color:#d43a56;white-space:pre;-webkit-text-stroke:0.12px currentColor;">0%</div>
<div style="left:121px;top:381.46px;font:400 16px/16px 'Liberation Sans', sans-serif;color:#1a1f2a;white-space:pre;-webkit-text-stroke:0.12px currentColor;">Discount rate</div>
<div style="left:-213px;width:600px;text-align:right;top:381.46px;font:400 16px/16px 'Liberation Sans', sans-serif;color:#d43a56;white-space:pre;-webkit-text-stroke:0.12px currentColor;">10%</div>
<div style="left:121px;top:402.46px;font:400 16px/16px 'Liberation Sans', sans-serif;color:#1a1f2a;white-space:pre;-webkit-text-stroke:0.12px currentColor;">Discount rate</div>
<div style="left:-213px;width:600px;text-align:right;top:402.46px;font:400 16px/16px 'Liberation Sans', sans-serif;color:#d43a56;white-space:pre;-webkit-text-stroke:0.12px currentColor;">20%</div>
<div style="left:121px;top:423.46px;font:400 16px/16px 'Liberation Sans', sans-serif;color:#1a1f2a;white-space:pre;-webkit-text-stroke:0.12px currentColor;">Discount rate</div>
<div style="left:-213px;width:600px;text-align:right;top:423.46px;font:400 16px/16px 'Liberation Sans', sans-serif;color:#d43a56;white-space:pre;-webkit-text-stroke:0.12px currentColor;">30%</div>
<div style="left:119px;top:483px;width:664px;height:39px;background:#fff;"></div>
<div style="left:278px;top:457px;width:1px;height:1px;background:#8a4a80;"></div>
<div style="left:122px;top:488.46px;font:700 16px/16px 'Liberation Sans', sans-serif;color:#1b28cc;white-space:pre;">Complete the following analysis. Do not hard code values in your calculations.</div>
<div style="left:122px;top:505.76px;font:700 16px/16px 'Liberation Sans', sans-serif;color:#1b28cc;white-space:pre;">You must use the built-in Excel function to answer this question.</div>
<div style="left:274px;top:543px;width:117px;height:22px;background:#8dfdfd;"></div>
<div style="left:121px;top:547.46px;font:400 16px/16px 'Liberation Sans', sans-serif;color:#1a1f2a;white-space:pre;-webkit-text-stroke:0.12px currentColor;">NPV at 0 percent</div>
<div style="left:274px;top:585px;width:117px;height:22px;background:#8dfdfd;"></div>
<div style="left:121px;top:589.46px;font:400 16px/16px 'Liberation Sans', sans-serif;color:#1a1f2a;white-space:pre;-webkit-text-stroke:0.12px currentColor;">NPV at 10 percent</div>
<div style="left:274px;top:627px;width:117px;height:22px;background:#8dfdfd;"></div>
<div style="left:121px;top:631.46px;font:400 16px/16px 'Liberation Sans', sans-serif;color:#1a1f2a;white-space:pre;-webkit-text-stroke:0.12px currentColor;">NPV at 20 percent</div>
<div style="left:274px;top:669px;width:117px;height:22px;background:#8dfdfd;"></div>
<div style="left:121px;top:673.46px;font:400 16px/16px 'Liberation Sans', sans-serif;color:#1a1f2a;white-space:pre;-webkit-text-stroke:0.12px currentColor;">NPV at 30 percent</div>
<div style="left:7px;top:688px;width:777px;height:1px;background:#c6c6c6;"></div>
<div style="left:784px;top:189px;width:19px;height:529px;background:#fff;"></div>
<div style="left:786px;top:205px;width:17px;height:483px;background:#e6e6e6;"></div>
<div style="left:786px;top:189px;width:15px;height:15px;border:1px solid #ababab;background:#e6e6e6;"></div>
<svg style="position:absolute;left:786px;top:189px" width="17" height="17" viewBox="0 0 17 17"><path d="M4.5 11 H12.5 L8.5 6.5 Z" fill="#606060"/></svg>
<div style="left:786px;top:253px;width:15px;height:323px;border:1px solid #ababab;background:#fff;"></div>
<div style="left:786px;top:671px;width:15px;height:15px;border:1px solid #ababab;background:#e6e6e6;"></div>
<svg style="position:absolute;left:786px;top:671px" width="17" height="17" viewBox="0 0 17 17"><path d="M4.5 6.5 H12.5 L8.5 11 Z" fill="#606060"/></svg>
<div style="left:7px;top:689px;width:796px;height:29px;background:#f3f3f3;"></div>
<svg style="position:absolute;left:34px;top:697px" width="8" height="10" viewBox="0 0 8 10"><path d="M6 1 V9 L1.5 5 Z" fill="#1e5a10"/></svg>
<svg style="position:absolute;left:64px;top:697px" width="8" height="10" viewBox="0 0 8 10"><path d="M2 1 V9 L6.5 5 Z" fill="#1e5a10"/></svg>
<div style="left:-202px;width:600px;text-align:center;top:695.00px;font:700 13px/13px 'Liberation Sans', sans-serif;color:#222;white-space:pre;">...</div>
<div style="left:112px;top:688px;width:71px;height:22px;background:#fff;border-left:1px solid #d5d5d5;border-right:1px solid #d5d5d5"></div>
<div style="left:112px;top:710px;width:73px;height:2px;background:#2c6a14;"></div>
<div style="left:-152.5px;width:600px;text-align:center;top:692.02px;font:700 15.5px/15.5px 'Liberation Serif', serif;color:#2f5e1c;white-space:pre;-webkit-text-stroke:0.3px currentColor;">Sheet1</div>
<div style="left:-102px;width:600px;text-align:center;top:695.00px;font:700 13px/13px 'Liberation Sans', sans-serif;color:#222;white-space:pre;">...</div>
<svg style="position:absolute;left:217px;top:693px" width="19" height="19" viewBox="0 0 19 19"><circle cx="9.5" cy="9.5" r="7.5" fill="none" stroke="#555" stroke-width="1.3"/><path d="M9.5 5 V14 M5 9.5 H14" stroke="#555" stroke-width="1.8"/></svg>
<div style="left:501px;top:694px;width:283px;height:17px;background:#e6e6e6;"></div>
<div style="left:484px;top:694px;width:15px;height:15px;border:1px solid #ababab;background:#e6e6e6;"></div>
<svg style="position:absolute;left:484px;top:694px" width="17" height="17" viewBox="0 0 17 17"><path d="M10.5 4.5 V12.5 L6 8.5 Z" fill="#606060"/></svg>
<div style="left:502px;top:694px;width:188px;height:15px;border:1px solid #ababab;background:#fff;"></div>
<div style="left:767px;top:694px;width:15px;height:15px;border:1px solid #ababab;background:#e6e6e6;"></div>
<svg style="position:absolute;left:767px;top:694px" width="17" height="17" viewBox="0 0 17 17"><path d="M6.5 4.5 V12.5 L11 8.5 Z" fill="#606060"/></svg>
<div style="left:7px;top:718px;width:796px;height:21px;background:#2e5f08;"></div>
<div style="left:18px;top:723.91px;font:700 10.5px/10.5px 'Liberation Sans', sans-serif;color:#f4f8e6;white-space:pre;">READY</div>
<div style="left:506px;top:718px;width:38px;height:21px;background:#1e4e0c;"></div>
<svg style="position:absolute;left:517px;top:721px" width="16" height="15" viewBox="0 0 16 15"><path d="M1.5 1.5 H14.5 V13.5 H1.5 Z M1.5 5.5 H14.5 M1.5 9.5 H14.5 M5.8 1.5 V13.5 M10.2 1.5 V13.5" fill="none" stroke="#e8f0e0" stroke-width="1.3"/></svg>
<svg style="position:absolute;left:555px;top:721px" width="16" height="15" viewBox="0 0 16 15"><rect x="1.5" y="1.5" width="13" height="12" fill="none" stroke="#eef6dc" stroke-width="1.3"/><rect x="4.5" y="3.5" width="7" height="8" fill="none" stroke="#eef6dc" stroke-width="1.1"/><path d="M6 5.5 H10 M6 7.5 H10 M6 9.5 H10" stroke="#eef6dc" stroke-width="1"/></svg>
<svg style="position:absolute;left:593px;top:721px" width="16" height="15" viewBox="0 0 16 15"><rect x="1.5" y="1.5" width="13" height="12" fill="none" stroke="#eef6dc" stroke-width="1.3"/><rect x="2" y="2" width="3" height="6.5" fill="#eef6dc"/><rect x="6.5" y="2" width="3.5" height="6.5" fill="#eef6dc"/></svg>
<div style="left:628px;top:728px;width:6px;height:2px;background:#f0f4e8;"></div>
<div style="left:638px;top:728px;width:100px;height:1px;background:#f0f4e8;"></div>
<div style="left:686px;top:723px;width:5px;height:11px;background:#f0f4e8;"></div>
<div style="left:742px;top:728px;width:9px;height:2px;background:#f0f4e8;"></div>
<div style="left:745.5px;top:724px;width:2px;height:10px;background:#f0f4e8;"></div>
<div style="left:193px;width:600px;text-align:right;top:723.71px;font:700 10.5px/10.5px 'Liberation Sans', sans-serif;color:#f4f8e6;white-space:pre;">100%</div>
<div style="left:5px;top:0px;width:2px;height:739px;background:#3a3a3a;"></div>
<div style="left:803px;top:0px;width:2px;height:739px;background:#3a3a3a;"></div>
</body></html>
